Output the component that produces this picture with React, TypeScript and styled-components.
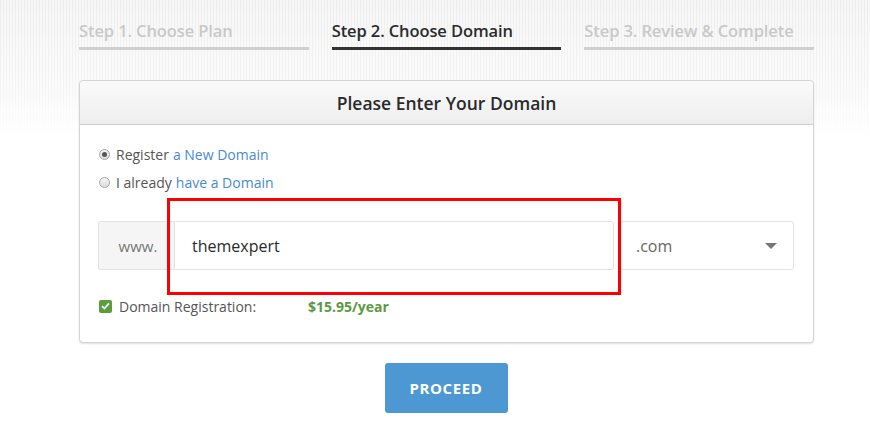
import React from "react";
import styled, { createGlobalStyle } from "styled-components";

const Global = createGlobalStyle`
  html, body { margin: 0; padding: 0; }
  body {
    font-family: "Open Sans", "Liberation Sans", sans-serif;
    background:
      linear-gradient(to bottom, rgba(255,255,255,0) 0px, rgba(255,255,255,0.5) 90px, #fff 140px),
      repeating-linear-gradient(90deg, #ececec 0px, #ececec 1px, #f7f7f7 1px, #f7f7f7 3px);
    background-repeat: no-repeat;
    background-size: 100% 441px;
    background-color: #fff;
    width: 870px;
    height: 441px;
    overflow: hidden;
  }
`;

const Page = styled.div`
  width: 735px;
  margin-left: 79px;
  padding-top: 19px;
`;

const Steps = styled.div`
  display: grid;
  grid-template-columns: repeat(3, 1fr);
  column-gap: 23px;
`;

const Step = styled.div<{ $active?: boolean }>`
  font-size: 16.5px;
  font-weight: 600;
  line-height: 24px;
  padding-bottom: 4px;
  color: ${(p) => (p.$active ? "#2b2b2b" : "#c9c9c9")};
  border-bottom: 3px solid ${(p) => (p.$active ? "#333" : "#cfcfcf")};
  letter-spacing: -0.1px;
  white-space: nowrap;
`;

const Panel = styled.div`
  margin-top: 30px;
  border: 1px solid #d4d4d4;
  border-radius: 4px;
  background: #fff;
  box-shadow: 0 1px 2px rgba(0, 0, 0, 0.12);
`;

const PanelHeader = styled.div`
  height: 43px;
  display: flex;
  align-items: center;
  justify-content: center;
  background: linear-gradient(to bottom, #fafafa, #eeeeee);
  border-bottom: 1px solid #cfcfcf;
  border-radius: 4px 4px 0 0;
  font-size: 17.5px;
  font-weight: 600;
  color: #2a2a2a;
`;

const PanelBody = styled.div`
  padding: 15px 19px 26px 18px;
`;

const RadioRow = styled.label`
  display: flex;
  align-items: center;
  height: 28px;
  font-size: 14px;
  color: #555;
`;

const Radio = styled.span<{ $checked?: boolean }>`
  width: 11px;
  height: 11px;
  border-radius: 50%;
  border: 1px solid #a8a8a8;
  background: linear-gradient(to bottom, #f4f4f4, #dcdcdc);
  margin-right: 6px;
  margin-left: 1px;
  display: flex;
  align-items: center;
  justify-content: center;
  box-sizing: border-box;
  &::after {
    content: "";
    width: 5px;
    height: 5px;
    border-radius: 50%;
    background: ${(p) => (p.$checked ? "#555" : "transparent")};
  }
`;

const Link = styled.a`
  color: #4a8ad0;
  text-decoration: none;
  margin-left: 4px;
`;

const InputGroup = styled.div`
  position: relative;
  margin-top: 25px;
  display: flex;
  height: 49px;
`;

const Addon = styled.div`
  width: 76px;
  box-sizing: border-box;
  display: flex;
  align-items: center;
  justify-content: center;
  background: #f5f5f5;
  border: 1px solid #e3e3e3;
  border-right: none;
  border-radius: 3px 0 0 3px;
  font-size: 15px;
  color: #777;
  padding-left: 3px;
`;

const TextInput = styled.div`
  width: 440px;
  box-sizing: border-box;
  display: flex;
  align-items: center;
  padding-left: 17px;
  border: 1px solid #e3e3e3;
  border-radius: 0 3px 3px 0;
  font-size: 16px;
  color: #2a2a2a;
`;

const Select = styled.div`
  margin-left: 6px;
  flex: 1;
  box-sizing: border-box;
  display: flex;
  align-items: center;
  justify-content: space-between;
  padding: 0 16px 0 15px;
  border: 1px solid #e3e3e3;
  border-radius: 3px;
  font-size: 16px;
  color: #666;
`;

const Caret = styled.span`
  width: 0;
  height: 0;
  border-left: 6px solid transparent;
  border-right: 6px solid transparent;
  border-top: 6px solid #777;
`;

const Highlight = styled.div`
  position: absolute;
  left: 69px;
  top: -23px;
  width: 454px;
  height: 97px;
  box-sizing: border-box;
  border: 3px solid #f00;
  pointer-events: none;
`;

const CheckRow = styled.div`
  margin-top: 26px;
  display: flex;
  align-items: center;
  font-size: 14px;
  color: #555;
  height: 20px;
`;

const CheckBox = styled.span`
  width: 13px;
  height: 13px;
  border-radius: 2px;
  background: #5a9e3c;
  display: flex;
  align-items: center;
  justify-content: center;
  margin-left: 1px;
  margin-right: 7px;
`;

const Label = styled.span`
  width: 189px;
`;

const Price = styled.span`
  font-weight: 700;
  color: #5b9a3e;
`;

const Actions = styled.div`
  display: flex;
  justify-content: center;
  margin-top: 20px;
  padding-right: 1px;
`;

const Button = styled.button`
  width: 123px;
  height: 50px;
  border: none;
  border-radius: 3px;
  background: #4d98d2;
  color: #fff;
  font-family: "Open Sans", "Liberation Sans", sans-serif;
  font-weight: 700;
  font-size: 15px;
  letter-spacing: 0.6px;
`;

export default function App() {
  return (
    <>
      <Global />
      <Page>
        <Steps>
          <Step>Step 1. Choose Plan</Step>
          <Step $active>Step 2. Choose Domain</Step>
          <Step>Step 3. Review &amp; Complete</Step>
        </Steps>
        <Panel>
          <PanelHeader>Please Enter Your Domain</PanelHeader>
          <PanelBody>
            <RadioRow>
              <Radio $checked />
              Register<Link>a New Domain</Link>
            </RadioRow>
            <RadioRow>
              <Radio />
              I already<Link>have a Domain</Link>
            </RadioRow>
            <InputGroup>
              <Addon>www.</Addon>
              <TextInput>themexpert</TextInput>
              <Select>
                .com
                <Caret />
              </Select>
              <Highlight />
            </InputGroup>
            <CheckRow>
              <CheckBox>
                <svg width="9" height="8" viewBox="0 0 9 8">
                  <path d="M1 4.2 L3.4 6.5 L8 1.3" stroke="#fff" strokeWidth="1.8" fill="none" />
                </svg>
              </CheckBox>
              <Label>Domain Registration:</Label>
              <Price>$15.95/year</Price>
            </CheckRow>
          </PanelBody>
        </Panel>
        <Actions>
          <Button>PROCEED</Button>
        </Actions>
      </Page>
    </>
  );
}
